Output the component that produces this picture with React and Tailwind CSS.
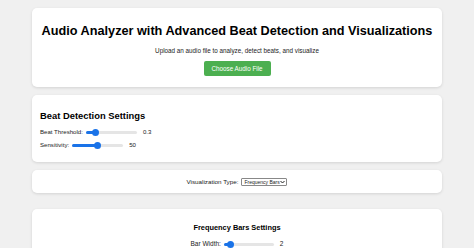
import React from "react";

function Slider({ width, pos }) {
  return (
    <div className="relative h-[8px] flex items-center" style={{ width }}>
      <div className="w-full h-[3px] rounded-full bg-[#e5e5e5]"></div>
      <div className="absolute left-0 h-[3px] rounded-full bg-[#1a73e8]" style={{ width: pos }}></div>
      <div className="absolute w-[7px] h-[7px] rounded-full bg-[#1a73e8]" style={{ left: pos - 3.5 }}></div>
    </div>
  );
}

export default function App() {
  return (
    <div className="min-h-screen bg-[#f0f0f0] pt-[8px] font-['Liberation_Sans',Arial,sans-serif] text-[#222] overflow-hidden h-[248px]">
      <div className="w-[410px] mx-auto flex flex-col">
        <div className="bg-white rounded-[5px] shadow-[0_1px_3px_rgba(0,0,0,0.12)] h-[79px] flex flex-col items-center pt-[15px]">
          <h1 className="text-[12.7px] font-bold text-black leading-[16px] whitespace-nowrap">
            Audio Analyzer with Advanced Beat Detection and Visualizations
          </h1>
          <p className="text-[6.3px] mt-[8px] leading-[8px]">
            Upload an audio file to analyze, detect beats, and visualize
          </p>
          <button className="mt-[6px] w-[67px] h-[15px] bg-[#4caf50] text-white text-[6.3px] rounded-[2px]">
            Choose Audio File
          </button>
        </div>

        <div className="bg-white rounded-[5px] shadow-[0_1px_3px_rgba(0,0,0,0.12)] h-[67px] mt-[8px] px-[8px] pt-[15px]">
          <h2 className="text-[9.4px] font-bold text-black leading-[12px]">Beat Detection Settings</h2>
          <div className="flex items-center mt-[6px] text-[6.1px] leading-[8px]">
            <span>Beat Threshold:</span>
            <div className="ml-[3px]"><Slider width={51} pos={10} /></div>
            <span className="ml-[6px]">0.3</span>
          </div>
          <div className="flex items-center mt-[5px] text-[6.1px] leading-[8px]">
            <span>Sensitivity:</span>
            <div className="ml-[3px]"><Slider width={51} pos={25} /></div>
            <span className="ml-[6px]">50</span>
          </div>
        </div>

        <div className="bg-white rounded-[5px] shadow-[0_1px_3px_rgba(0,0,0,0.12)] h-[23px] mt-[8px] flex items-center justify-center text-[6.25px]">
          <span>Visualization Type:</span>
          <div className="ml-[3px] w-[46px] h-[8px] border border-[#888] rounded-[1px] pl-[2px] pr-[1px] flex items-center justify-between">
            <span className="text-[5px] leading-[6px] whitespace-nowrap">Frequency Bars</span>
            <svg width="5" height="4" viewBox="0 0 10 8">
              <path d="M1 2 L5 6 L9 2" stroke="#222" strokeWidth="2" fill="none" />
            </svg>
          </div>
        </div>

        <div className="bg-white rounded-[5px] shadow-[0_1px_3px_rgba(0,0,0,0.12)] h-[60px] mt-[16px] flex flex-col items-center pt-[14px]">
          <h3 className="text-[7.4px] font-bold text-black leading-[10px]">Frequency Bars Settings</h3>
          <div className="flex items-center mt-[7px] text-[6.5px] leading-[8px]">
            <span>Bar Width:</span>
            <div className="ml-[3px]"><Slider width={50} pos={7} /></div>
            <span className="ml-[6px]">2</span>
          </div>
        </div>
      </div>
    </div>
  );
}
